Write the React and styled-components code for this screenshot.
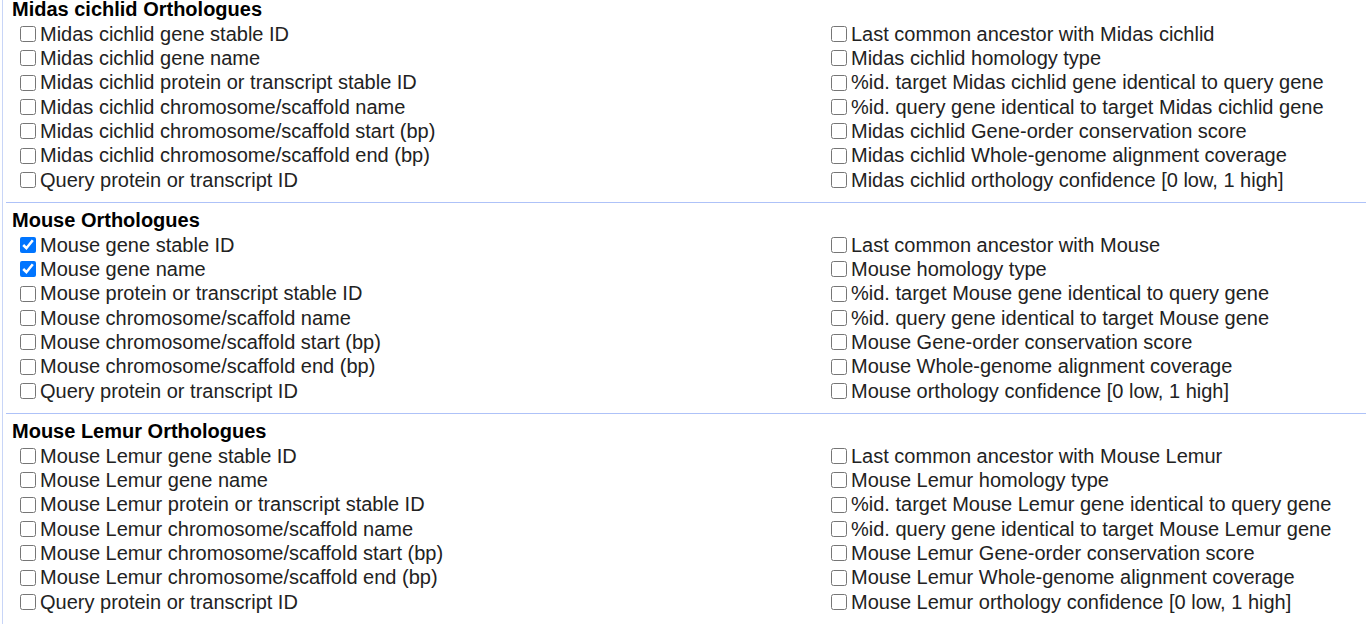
import React from "react";
import styled, { createGlobalStyle } from "styled-components";

const Global = createGlobalStyle`
  html, body {
    margin: 0;
    padding: 0;
    background: #fff;
  }
  body {
    font-family: "Liberation Sans", Arial, sans-serif;
    overflow: hidden;
  }
`;

const Panel = styled.div`
  margin-top: -8px;
  margin-left: 2px;
  border-left: 1px solid #c8d5f7;
  padding-left: 3px;
`;

const Section = styled.div`
  border-bottom: 1px solid #aec2f8;
  padding: 5px 0 9.7px;
`;

const Title = styled.div`
  font-size: 20px;
  font-weight: 700;
  color: #000;
  line-height: 24px;
  padding-left: 6px;
  margin-bottom: 1px;
`;

const Columns = styled.div`
  display: grid;
  grid-template-columns: 811px 1fr;
  padding-left: 9px;
`;

const Column = styled.div`
  display: flex;
  flex-direction: column;
`;

const Row = styled.label`
  display: flex;
  align-items: center;
  height: 24.33px;
  font-size: 20px;
  color: #222;
  white-space: nowrap;
`;

const Box = styled.input`
  width: 16px;
  height: 16px;
  margin: 0 4px 0 5px;
  flex: none;
  accent-color: #0075ff;
`;

const left = (n) => [
  `${n} gene stable ID`,
  `${n} gene name`,
  `${n} protein or transcript stable ID`,
  `${n} chromosome/scaffold name`,
  `${n} chromosome/scaffold start (bp)`,
  `${n} chromosome/scaffold end (bp)`,
  "Query protein or transcript ID",
];

const right = (n) => [
  `Last common ancestor with ${n}`,
  `${n} homology type`,
  `%id. target ${n} gene identical to query gene`,
  `%id. query gene identical to target ${n} gene`,
  `${n} Gene-order conservation score`,
  `${n} Whole-genome alignment coverage`,
  `${n} orthology confidence [0 low, 1 high]`,
];

const species = [
  { name: "Midas cichlid", checked: [] },
  { name: "Mouse", checked: [0, 1] },
  { name: "Mouse Lemur", checked: [] },
];

function Item({ label, checked }) {
  return (
    <Row>
      <Box type="checkbox" defaultChecked={checked} />
      {label}
    </Row>
  );
}

export default function App() {
  return (
    <>
      <Global />
      <Panel>
        {species.map((s) => (
          <Section key={s.name}>
            <Title>{s.name} Orthologues</Title>
            <Columns>
              <Column>
                {left(s.name).map((t, i) => (
                  <Item key={t} label={t} checked={s.checked.includes(i)} />
                ))}
              </Column>
              <Column>
                {right(s.name).map((t) => (
                  <Item key={t} label={t} checked={false} />
                ))}
              </Column>
            </Columns>
          </Section>
        ))}
      </Panel>
    </>
  );
}
